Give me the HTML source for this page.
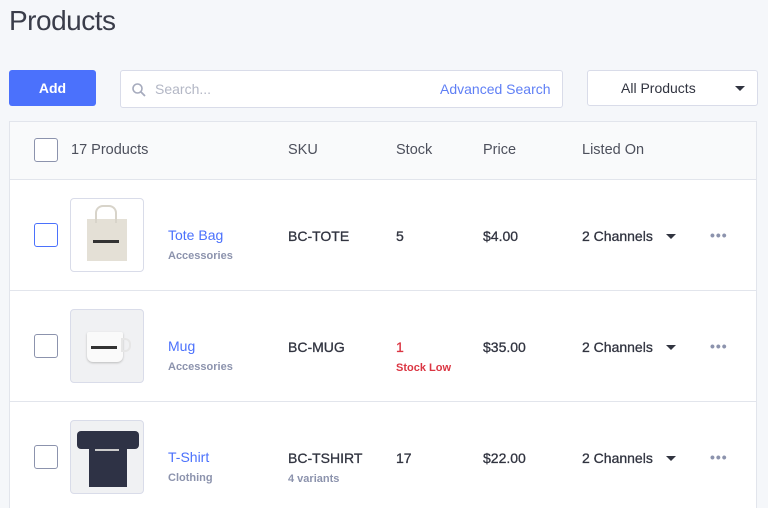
<!DOCTYPE html>
<html><head><style>
*{box-sizing:border-box;margin:0;padding:0}
html,body{width:768px;height:508px;overflow:hidden}
body{background:#f5f7fa;font-family:"Liberation Sans",sans-serif;color:#313440;position:relative}
.a{position:absolute}
h1{position:absolute;left:9px;top:5px;font-size:28px;font-weight:400;color:#3a3d4a;letter-spacing:-0.5px}
.btn{left:9px;top:70px;width:87px;height:36px;background:#4b71fc;border-radius:3px;color:#fff;font-size:14px;font-weight:bold;text-align:center;line-height:36px}
.search{left:120px;top:70px;width:443px;height:38px;background:#fff;border:1px solid #d9dce9;border-radius:3px}
.sel{left:587px;top:70px;width:171px;height:36px;background:#fff;border:1px solid #d9dce9;border-radius:3px;font-size:14px;line-height:34px}
.table{left:9px;top:121px;width:748px;height:390px;background:#fff;border:1px solid #e2e5ec}
.head{left:0;top:0;width:746px;height:58px;background:#f9fafb;border-bottom:1px solid #e2e5ec;font-size:14.5px;color:#4d505c}
.row{left:0;width:746px;height:111px;border-bottom:1px solid #e2e5ec;font-size:14px}
.cb{width:24px;height:24px;border:1px solid #8c93ad;border-radius:3px;background:#fff}
.img{left:60px;top:18px;width:74px;height:74px;border:1px solid #d9dce9;border-radius:4px;background:#f0f1f3;overflow:hidden}
.name{left:158px;top:47px;color:#4b71fc;font-size:14px}
.cat{left:158px;top:70px;color:#8c93ad;font-size:11px;font-weight:bold}
.b{color:#313440;-webkit-text-stroke:0.3px #313440}
.tri{width:0;height:0;border-left:5px solid transparent;border-right:5px solid transparent;border-top:5px solid #313440}
.dots{left:700px;top:52px;font-size:14px;color:#8c93ad;letter-spacing:1px;font-weight:bold;line-height:6px}
</style></head><body>
<h1>Products</h1>
<div class="a btn">Add</div>
<div class="a search">
<svg class="a" style="left:10px;top:11px" width="16" height="16" viewBox="0 0 16 16"><circle cx="6.5" cy="6.5" r="4.5" fill="none" stroke="#a6abbd" stroke-width="1.6"/><line x1="10" y1="10" x2="14" y2="14" stroke="#a6abbd" stroke-width="1.8"/></svg>
<div class="a" style="left:34px;top:10px;font-size:14px;color:#b3b7c5">Search...</div>
<div class="a" style="left:319px;top:10px;font-size:14px;color:#5f7ff5">Advanced Search</div>
</div>
<div class="a sel"><span class="a" style="left:33px">All Products</span><div class="a tri" style="left:147px;top:15px"></div></div>
<div class="a table">
<div class="a head">
<div class="a cb" style="left:24px;top:16px"></div>
<div class="a" style="left:61px;top:20px">17 Products</div>
<div class="a" style="left:278px;top:20px">SKU</div>
<div class="a" style="left:386px;top:20px">Stock</div>
<div class="a" style="left:473px;top:20px">Price</div>
<div class="a" style="left:572px;top:20px">Listed On</div>
</div>
<div class="a row" style="top:58px">
<div class="a cb" style="left:24px;top:43px;border-color:#4b71fc"></div>
<div class="a img" style="background:#fff"><div class="a" style="left:16px;top:20px;width:40px;height:42px;background:#e4e0d6"></div><div class="a" style="left:24px;top:6px;width:22px;height:18px;border:2px solid #d8d4ca;border-bottom:none;border-radius:8px 8px 0 0"></div><div class="a" style="left:22px;top:41px;width:26px;height:3px;background:#333"></div></div>
<div class="a name">Tote Bag</div><div class="a cat">Accessories</div>
<div class="a b" style="left:278px;top:48px">BC-TOTE</div>
<div class="a b" style="left:386px;top:48px">5</div>
<div class="a b" style="left:473px;top:48px">$4.00</div>
<div class="a b" style="left:572px;top:48px">2 Channels</div><div class="a tri" style="left:656px;top:54px"></div>
<div class="a dots">•••</div>
</div>
<div class="a row" style="top:169px">
<div class="a cb" style="left:24px;top:43px"></div>
<div class="a img"><div class="a" style="left:16px;top:22px;width:36px;height:30px;background:#fafafa;border-radius:2px 2px 6px 6px;box-shadow:0 1px 2px #bbb"></div><div class="a" style="left:50px;top:28px;width:10px;height:14px;border:2px solid #e6e6e6;border-radius:0 6px 6px 0"></div><div class="a" style="left:20px;top:36px;width:26px;height:3px;background:#333"></div></div>
<div class="a name">Mug</div><div class="a cat">Accessories</div>
<div class="a b" style="left:278px;top:48px">BC-MUG</div>
<div class="a b" style="left:386px;top:48px;color:#db3643;-webkit-text-stroke-color:#db3643">1</div>
<div class="a" style="left:386px;top:71px;font-size:11px;font-weight:bold;color:#db3643">Stock Low</div>
<div class="a b" style="left:473px;top:48px">$35.00</div>
<div class="a b" style="left:572px;top:48px">2 Channels</div><div class="a tri" style="left:656px;top:54px"></div>
<div class="a dots">•••</div>
</div>
<div class="a row" style="top:280px;border-bottom:none">
<div class="a cb" style="left:24px;top:43px"></div>
<div class="a img"><div class="a" style="left:18px;top:10px;width:38px;height:56px;background:#2e3245"></div><div class="a" style="left:6px;top:10px;width:62px;height:18px;background:#2e3245;border-radius:4px"></div><div class="a" style="left:24px;top:28px;width:24px;height:2px;background:#ccc"></div></div>
<div class="a name">T-Shirt</div><div class="a cat">Clothing</div>
<div class="a b" style="left:278px;top:48px">BC-TSHIRT</div>
<div class="a" style="left:278px;top:71px;font-size:11px;font-weight:bold;color:#8c93ad">4 variants</div>
<div class="a b" style="left:386px;top:48px">17</div>
<div class="a b" style="left:473px;top:48px">$22.00</div>
<div class="a b" style="left:572px;top:48px">2 Channels</div><div class="a tri" style="left:656px;top:54px"></div>
<div class="a dots">•••</div>
</div>
</div>
</body></html>
